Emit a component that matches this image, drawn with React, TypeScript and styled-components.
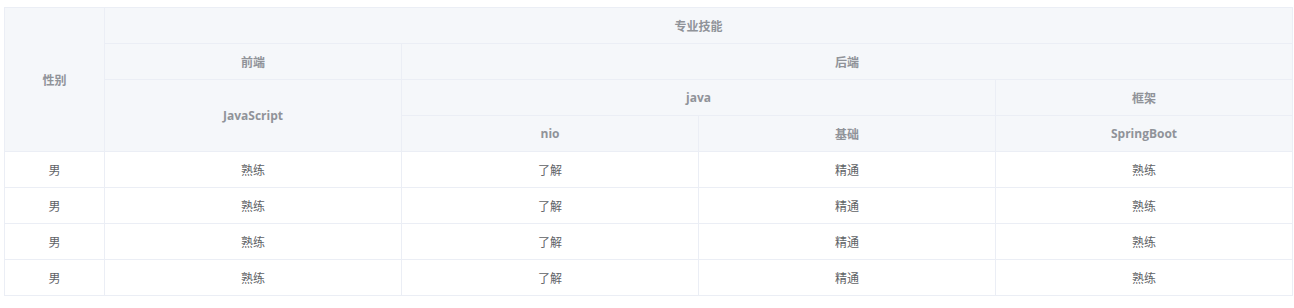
import styled, { createGlobalStyle } from "styled-components"

const GlobalStyle = createGlobalStyle`
  body {
    margin: 0;
    background: #fff;
    font-family: "Open Sans", "Noto Sans CJK SC", sans-serif;
  }
`

const Wrapper = styled.div`
  padding: 7px 0 0 4px;
`

const Table = styled.table`
  width: 1288px;
  border-collapse: collapse;
  table-layout: fixed;
  font-size: 12px;
`

const HeadCell = styled.th`
  height: 35px;
  padding: 0 10px;
  border: 1px solid #ebeef5;
  background: #f5f7fa;
  color: #909399;
  font-weight: bold;
  text-align: center;
  vertical-align: middle;
`

const Cell = styled.td`
  height: 35px;
  padding: 0 10px;
  border: 1px solid #ebeef5;
  color: #606266;
  text-align: center;
  vertical-align: middle;
`

const rows = [
  { sex: "男", js: "熟练", nio: "了解", basic: "精通", spring: "熟练" },
  { sex: "男", js: "熟练", nio: "了解", basic: "精通", spring: "熟练" },
  { sex: "男", js: "熟练", nio: "了解", basic: "精通", spring: "熟练" },
  { sex: "男", js: "熟练", nio: "了解", basic: "精通", spring: "熟练" },
]

export default function App() {
  return (
    <Wrapper>
      <GlobalStyle />
      <Table>
        <colgroup>
          <col style={{ width: 100 }} />
          <col style={{ width: 297 }} />
          <col style={{ width: 297 }} />
          <col style={{ width: 297 }} />
          <col style={{ width: 297 }} />
        </colgroup>
        <thead>
          <tr>
            <HeadCell rowSpan={4}>性别</HeadCell>
            <HeadCell colSpan={4}>专业技能</HeadCell>
          </tr>
          <tr>
            <HeadCell>前端</HeadCell>
            <HeadCell colSpan={3}>后端</HeadCell>
          </tr>
          <tr>
            <HeadCell rowSpan={2}>JavaScript</HeadCell>
            <HeadCell colSpan={2}>java</HeadCell>
            <HeadCell>框架</HeadCell>
          </tr>
          <tr>
            <HeadCell>nio</HeadCell>
            <HeadCell>基础</HeadCell>
            <HeadCell>SpringBoot</HeadCell>
          </tr>
        </thead>
        <tbody>
          {rows.map((r, i) => (
            <tr key={i}>
              <Cell>{r.sex}</Cell>
              <Cell>{r.js}</Cell>
              <Cell>{r.nio}</Cell>
              <Cell>{r.basic}</Cell>
              <Cell>{r.spring}</Cell>
            </tr>
          ))}
        </tbody>
      </Table>
    </Wrapper>
  )
}
